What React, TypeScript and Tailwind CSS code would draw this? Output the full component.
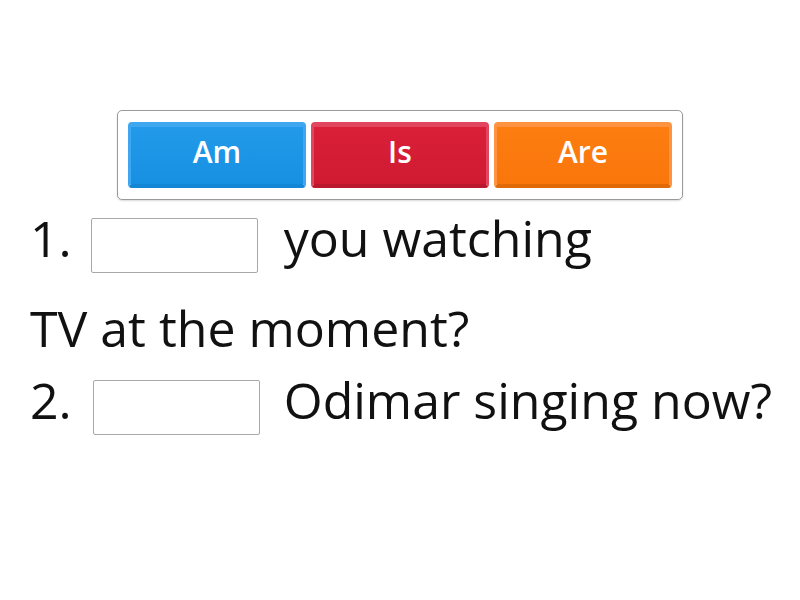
const answers = [
  { label: "Am", cls: "bg-gradient-to-b from-[#229ae9] to-[#1890e2] border-[#3ea7ef] border-b-[#1386d6]" },
  { label: "Is", cls: "bg-gradient-to-b from-[#da1f38] to-[#cf1b32] border-[#e2465e] border-b-[#b9182d]" },
  { label: "Are", cls: "bg-gradient-to-b from-[#fd7d11] to-[#f9760b] border-[#fe9442] border-b-[#e06a08]" },
];

function Blank() {
  return <div className="w-[167px] h-[55px] shrink-0 border border-[#a8a8a8] rounded-[2px] bg-white" />;
}

const word = "leading-[36px] pb-[16px] whitespace-nowrap";

export default function App() {
  return (
    <div className="w-[800px] h-[600px] bg-white text-[#111] font-['Open_Sans',sans-serif] overflow-hidden">
      <div className="pt-[110px] flex justify-center">
        <div className="w-[566px] h-[90px] border border-[#9a9a9a] rounded-[5px] shadow-[0_1px_2px_rgba(0,0,0,0.15)] px-[10px] pt-[11px] flex gap-[5px]">
          {answers.map((a) => (
            <div
              key={a.label}
              className={`flex-1 h-[66px] rounded-[4px] border-x-[3px] border-t-[5px] border-b-[4px] flex items-center justify-center pb-[9px] text-white text-[30px] font-semibold ${a.cls}`}
            >
              {a.label}
            </div>
          ))}
        </div>
      </div>

      <div className="pl-[30px] pr-[10px] pt-[18px] text-[50px]">
        <div className="flex flex-wrap items-center gap-x-[19px] gap-y-[37px]">
          <span className={word}>1.</span>
          <Blank />
          <span className={`${word} ml-[7px]`}>you watching</span>
          <span className={word}>TV at the moment?</span>
        </div>
        <div className="flex flex-wrap items-center gap-x-[19px] mt-[18px]">
          <span className={word}>2.</span>
          <div className="ml-[2px]">
            <Blank />
          </div>
          <span className={`${word} ml-[5px]`}>Odimar singing now?</span>
        </div>
      </div>
    </div>
  );
}
